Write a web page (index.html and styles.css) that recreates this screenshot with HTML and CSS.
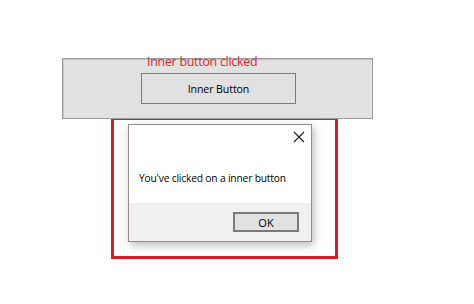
FILE: index.html
```html
<!DOCTYPE html>
<html>
<head>
<meta charset="utf-8">
<link rel="stylesheet" href="styles.css">
</head>
<body>
<div class="panel">
  <div class="label">Inner button clicked</div>
  <div class="inner-btn">Inner Button</div>
</div>
<div class="redbox">
  <div class="dialog">
    <div class="dlg-top">
      <svg class="close" width="12" height="12" viewBox="0 0 12 12"><path d="M1 1 L11 11 M11 1 L1 11" stroke="#222" stroke-width="1.2" fill="none"/></svg>
    </div>
    <div class="msg">You've clicked on a inner button</div>
    <div class="footer">
      <div class="ok">OK</div>
    </div>
  </div>
</div>
</body>
</html>
```
FILE: styles.css
```css
html, body {
  margin: 0;
  padding: 0;
  background: #ffffff;
}
body {
  font-family: "Open Sans", "Noto Sans", sans-serif;
  color: #111;
}
.panel {
  margin: 58px 0 0 62px;
  width: 309px;
  height: 59px;
  border: 1px solid #9c9c9c;
  box-shadow: inset 1px 1px 0 #c4c4c4;
  background: #e1e1e1;
  position: relative;
}
.label {
  position: absolute;
  left: 84px;
  top: -5px;
  font-size: 12.4px;
  line-height: 16px;
  color: #e3232b;
  letter-spacing: -0.25px;
}
.inner-btn {
  margin: 14px 0 0 78px;
  width: 153px;
  height: 29px;
  border: 1px solid #7a7a7a;
  background: #e1e1e1;
  display: flex;
  align-items: center;
  justify-content: center;
  font-size: 10.6px;
  color: #000;
  letter-spacing: -0.1px;
}
.redbox {
  margin: -2px 0 0 111px;
  border: 3px solid #dc1a24;
  padding: 4px 0 0 14px;
  box-sizing: content-box;
  height: 132px;
  width: 207px;
}
.dialog {
  width: 182px;
  height: 116px;
  border: 1px solid #8e8e8e;
  background: #ffffff;
  box-shadow: 2px 3px 8px rgba(0,0,0,0.28);
  display: flex;
  flex-direction: column;
}
.dlg-top {
  height: 18px;
  display: flex;
  justify-content: flex-end;
  align-items: flex-end;
  padding-right: 6px;
}
.close {
  display: block;
}
.msg {
  margin-top: 28px;
  padding-left: 10px;
  font-size: 10.2px;
  line-height: 14px;
  color: #000;
  flex: 0 0 auto;
  letter-spacing: -0.15px;
}
.footer {
  margin-top: auto;
  height: 38px;
  background: #f0f0f0;
  display: flex;
  justify-content: flex-end;
  align-items: center;
  padding-right: 12px;
}
.ok {
  width: 62px;
  height: 16px;
  border: 2px solid #7a7a7a;
  background: #e1e1e1;
  display: flex;
  align-items: center;
  justify-content: center;
  font-size: 11px;
  color: #000;
  box-sizing: content-box;
}
```
